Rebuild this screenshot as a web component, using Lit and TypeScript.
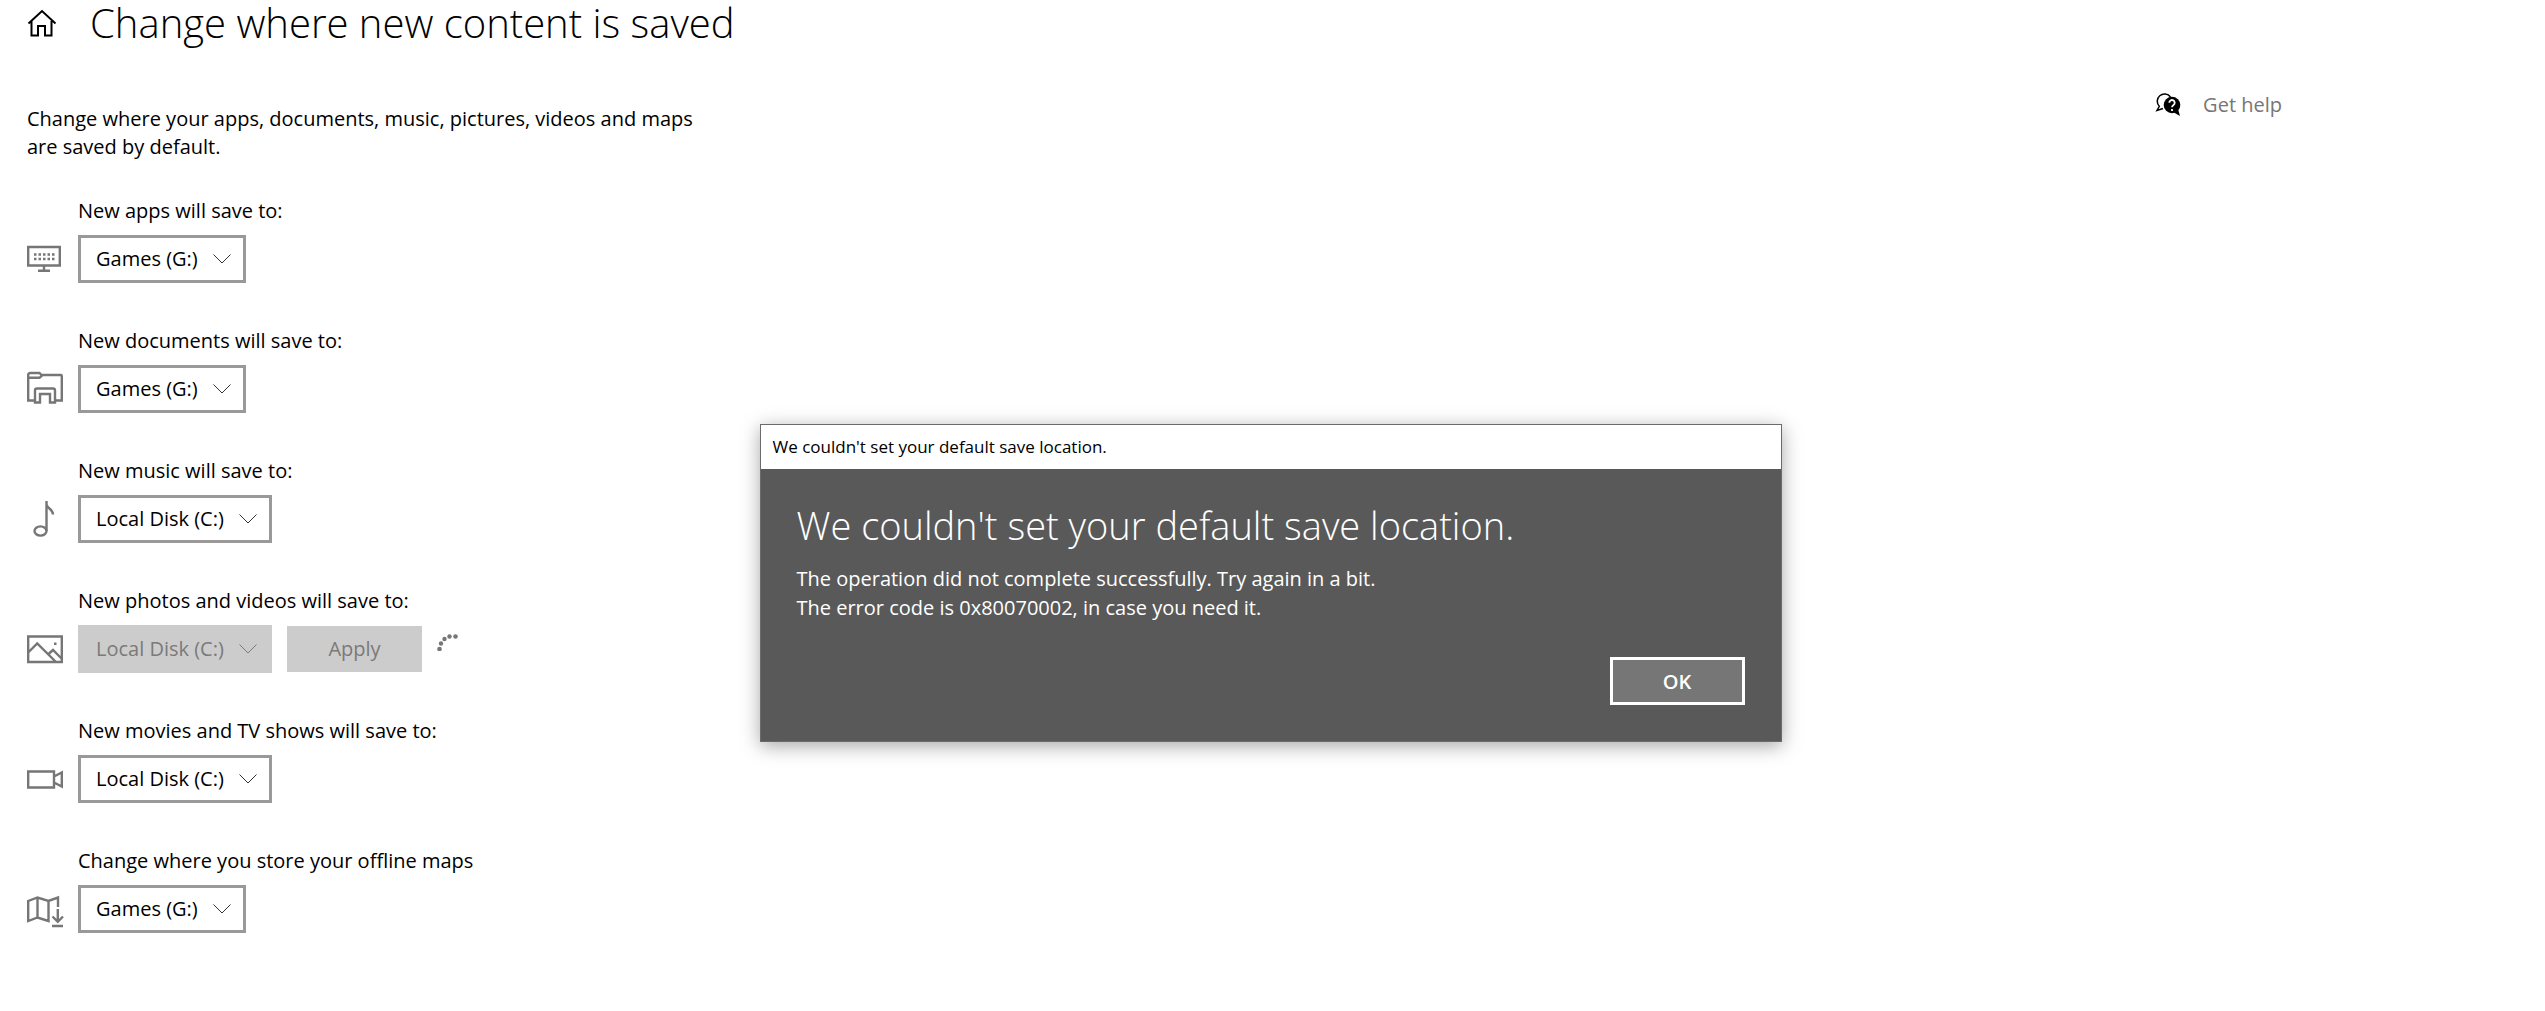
import { LitElement, html, css, svg, nothing } from "lit";
import { customElement } from "lit/decorators.js";

type Row = { id: string; label: string; drive: string; icon: string; busy?: boolean };

const GAMES = "Games (G:)";
const LOCAL = "Local Disk (C:)";

const ROWS: Row[] = [
  { id: "apps", label: "New apps will save to:", drive: GAMES, icon: "apps" },
  { id: "documents", label: "New documents will save to:", drive: GAMES, icon: "documents" },
  { id: "music", label: "New music will save to:", drive: LOCAL, icon: "music" },
  { id: "photos", label: "New photos and videos will save to:", drive: LOCAL, icon: "photos", busy: true },
  { id: "movies", label: "New movies and TV shows will save to:", drive: LOCAL, icon: "movies" },
  { id: "maps", label: "Change where you store your offline maps", drive: GAMES, icon: "maps" },
];

const GLYPHS: Record<string, unknown> = {
  apps: svg`
    <path d="M1.200 6h31.600v18.500H1.200z M17 24.500v5 M11 29.800h12" />
    <path d="M7 13.500h21 M7 18h21" stroke-dasharray="2.500 2" />`,
  documents: svg`
    <path d="M1.200 4q0-2 2-2h9.300l2 2h19.300q1 0 1 1V29.500h-6 M8 29.500H1.200V3 M1.200 6.800h11.300l3-2.800" />
    <path d="M8 31.500V19.500q0-2 2-2h16q2 0 2 2v12h-5v-8.500H13v8.500z" />`,
  music: svg`
    <ellipse cx="13.500" cy="30" rx="6" ry="4.600" />
    <path d="M19.500 30V0 M19.500 3.500C20.500 8 26 8 26 13.500" />`,
  photos: svg`
    <path d="M1.200 5.500h33.600v25.500H1.200z M1.200 21.500l9-9L29 31 M21 23.500l5-4.500L35 28" />
    <rect x="27" y="11.500" width="2.500" height="2.500" fill="currentColor" stroke="none" />`,
  movies: svg`
    <path d="M1.200 10.500h25.800v16H1.200z M27 15.500l7.800-4v14l-7.800-4" />`,
  maps: svg`
    <path d="M31 16V6.500L21.500 10 10.500 6.500 1.200 10v20l9.300-3.500 11 3.500V10 M10.500 6.500v20" />
    <path d="M30.800 18v12 M25.500 25.500l5.300 5.300L36 25.500 M25 35H36" />`,
};

@customElement("app-root")
export class AppRoot extends LitElement {
  static styles = css`
    :host {
      display: block;
      min-height: 100vh;
      box-sizing: border-box;
      background: #fff;
      color: #000;
      font-family: "Open Sans", "Noto Sans", sans-serif;
      font-size: 20px;
      line-height: 28px;
    }
    h1, h2, p { margin: 0; font-weight: 400; }
    svg { display: block; fill: none; stroke: currentColor; }
    .top { display: flex; align-items: center; gap: 32px; height: 46px; padding-left: 26px; }
    .home { display: block; color: #000; }
    .top h1 { font-size: 40px; line-height: 46px; font-weight: 300; }
    .body { display: flex; padding: 59px 263px 0 27px; justify-content: space-between; align-items: flex-start; }
    .intro { max-width: 680px; padding-bottom: 36px; }
    .list { display: grid; gap: 30px; }
    .row {
      display: grid;
      grid-template-columns: 36px auto;
      column-gap: 15px;
      row-gap: 10px;
      justify-content: start;
      padding-bottom: 14px;
    }
    .row label { grid-column: 2; }
    .glyph { color: #767676; stroke-width: 2.4; align-self: center; overflow: visible; }
    .line { display: flex; align-items: center; gap: 15px; min-height: 48px; }
    .pick { display: grid; align-items: center; }
    .pick select, .pick svg { grid-area: 1 / 1; }
    .pick svg { justify-self: end; margin-right: 15px; pointer-events: none; color: #333; }
    select {
      appearance: none;
      box-sizing: border-box;
      height: 48px;
      margin: 0;
      padding: 0 45px 0 15px;
      border: 3px solid #999;
      border-radius: 0;
      background: #fff;
      color: #000;
      font: inherit;
    }
    select:disabled { background: #ccc; border-color: #ccc; color: #7a7a7a; opacity: 1; }
    select:disabled + svg { color: #7a7a7a; }
    .apply { width: 135px; height: 46px; padding: 0; border: 0; background: #ccc; color: #7a7a7a; font: inherit; }
    .spin { align-self: flex-start; margin-top: 8px; color: #767676; }
    .help { display: flex; align-items: center; gap: 22px; margin-top: -14px; color: #767676; text-decoration: none; }
    .help svg { color: #000; }
    .dialog {
      position: absolute;
      left: 50%;
      top: 424px;
      width: 1022px;
      transform: translateX(-50%);
      margin-left: -2px;
      box-sizing: border-box;
      border: 1px solid #6b6b6b;
      background: #595959;
      color: #fff;
      box-shadow: 0 4px 18px rgba(0, 0, 0, 0.35);
    }
    .caption { padding: 8px 12px; background: #fff; color: #000; font-size: 17px; }
    .pane { display: flex; flex-direction: column; padding: 31px 36px 36px; line-height: 29px; }
    .pane h2 { font-size: 38px; line-height: 50px; font-weight: 300; margin-bottom: 14px; }
    .ok {
      align-self: flex-end;
      box-sizing: border-box;
      width: 135px;
      height: 48px;
      margin-top: 35px;
      border: 3px solid #fff;
      background: #767676;
      color: #fff;
      font: inherit;
      font-weight: 600;
    }
  `;

  private row(r: Row) {
    return html`
      <div class="row">
        <label for=${r.id}>${r.label}</label>
        <svg class="glyph" width="36" height="36" viewBox="0 0 36 36" aria-hidden="true">${GLYPHS[r.icon]}</svg>
        <div class="line">
          <div class="pick">
            <select id=${r.id} ?disabled=${r.busy}><option>${r.drive}</option></select>
            <svg width="18" height="10" viewBox="0 0 18 10" aria-hidden="true"><path d="M.5.5L9 9 17.500.5" /></svg>
          </div>
          ${r.busy
            ? html`<button class="apply" disabled>Apply</button>
                <svg class="spin" width="22" height="18" viewBox="0 0 22 18" aria-hidden="true">
                  <g fill="currentColor" stroke="none">
                    <circle cx="2.500" cy="16" r="2.300" /><circle cx="4" cy="10.500" r="2.200" />
                    <circle cx="7.500" cy="6" r="2.200" /><circle cx="12.500" cy="3.500" r="2.200" />
                    <circle cx="18.500" cy="3.500" r="2.300" />
                  </g>
                </svg>`
            : nothing}
        </div>
      </div>
    `;
  }

  render() {
    return html`
      <header class="top">
        <a class="home" href="#" aria-label="Home">
          <svg width="32" height="28" viewBox="0 0 32 28" stroke-width="2">
            <path d="M2.500 14.500L16 2l13.500 12.500 M5.500 12v14.500h6.500V17h7v9.500h6.500V12" />
          </svg>
        </a>
        <h1>Change where new content is saved</h1>
      </header>
      <div class="body">
        <main>
          <p class="intro">Change where your apps, documents, music, pictures, videos and maps are saved by default.</p>
          <div class="list">${ROWS.map((r) => this.row(r))}</div>
        </main>
        <a class="help" href="#">
          <svg width="26" height="26" viewBox="0 0 26 26" aria-hidden="true">
            <path d="M4.500 14.500A7.300 7.300 0 1 1 15.500 5 M4.500 14l-2.500 4.500 6-2" stroke-width="1.500" />
            <circle cx="17" cy="13" r="8.300" fill="currentColor" stroke="none" />
            <path d="M18 20l7 4-2-7z" fill="currentColor" stroke="none" />
            <path d="M14.300 10.800a2.700 2.700 0 1 1 4.200 2.200q-1.500 1-1.500 2.300 M17 17v2" stroke="#fff" stroke-width="1.800" />
          </svg>
          Get help
        </a>
      </div>
      <section class="dialog" role="dialog" aria-labelledby="dialog-title">
        <div class="caption">We couldn't set your default save location.</div>
        <div class="pane">
          <h2 id="dialog-title">We couldn't set your default save location.</h2>
          <p>The operation did not complete successfully. Try again in a bit.<br />The error code is 0x80070002, in case you need it.</p>
          <button class="ok">OK</button>
        </div>
      </section>
    `;
  }
}
